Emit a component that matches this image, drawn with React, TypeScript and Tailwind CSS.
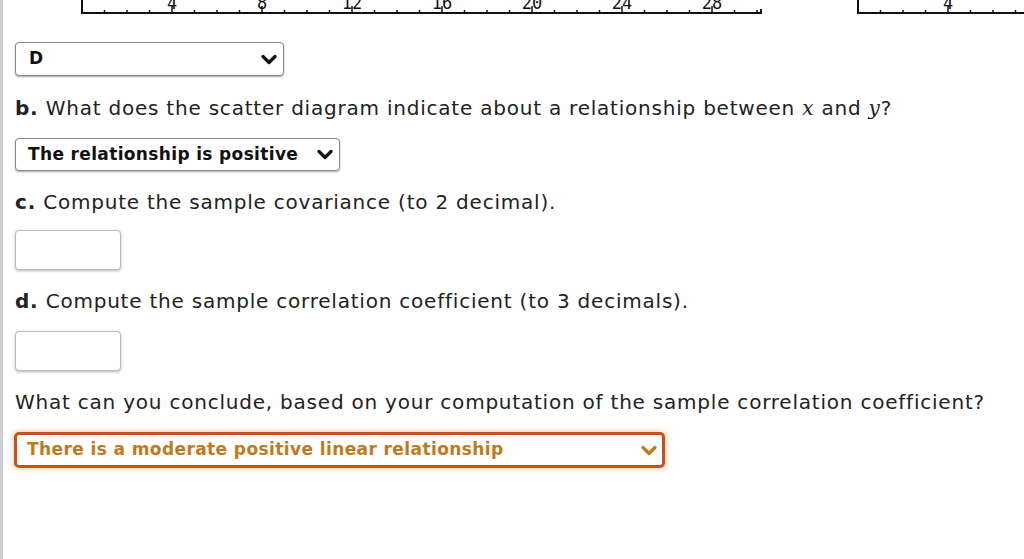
import React from 'react';

const font = { fontFamily: '"DejaVu Sans", Verdana, sans-serif' };

const Chevron = ({ color = '#111' }: { color?: string }) => (
  <svg width="16" height="11" viewBox="0 0 16 11" className="shrink-0">
    <polyline points="2,2.5 8,8.5 14,2.5" fill="none" stroke={color} strokeWidth="3.2" strokeLinecap="round" strokeLinejoin="round" />
  </svg>
);

const AxisStrip = () => {
  const unit = 22.5;
  const x0 = 82;
  const minor = Array.from({ length: 31 }, (_, i) => i);
  const labels = [4, 8, 12, 16, 20, 24, 28];
  const x1 = 858;
  return (
    <svg width="1024" height="20" className="block">
      <line x1={x0} y1="0" x2={x0} y2="14" stroke="#111" strokeWidth="2" />
      <line x1={x0} y1="13" x2="761" y2="13" stroke="#111" strokeWidth="2" />
      <line x1="761" y1="9" x2="761" y2="14" stroke="#111" strokeWidth="2" />
      {minor.map((i) => (
        <line key={i} x1={x0 + i * unit} y1={labels.includes(i) ? 6 : 10} x2={x0 + i * unit} y2="13" stroke="#111" strokeWidth="1.5" />
      ))}
      {labels.map((n) => (
        <text key={n} x={x0 + n * unit} y="9" textAnchor="middle" fontSize="17" fontFamily='"DejaVu Sans Mono", monospace' fill="#111">{n}</text>
      ))}
      <line x1={x1} y1="0" x2={x1} y2="14" stroke="#111" strokeWidth="2" />
      <line x1={x1} y1="13" x2="1024" y2="13" stroke="#111" strokeWidth="2" />
      {Array.from({ length: 8 }, (_, i) => i).map((i) => (
        <line key={i} x1={x1 + i * unit} y1={i === 4 ? 6 : 10} x2={x1 + i * unit} y2="13" stroke="#111" strokeWidth="1.5" />
      ))}
      <text x={x1 + 4 * unit} y="9" textAnchor="middle" fontSize="17" fontFamily='"DejaVu Sans Mono", monospace' fill="#111">4</text>
    </svg>
  );
};

const Select = ({ label, className }: { label: string; className: string }) => (
  <div className={`flex items-center justify-between rounded-[4px] border border-[#8a8a8a] bg-white shadow-[0_1px_2px_rgba(0,0,0,0.35)] ${className}`}>
    <span className="text-[17px] font-bold tracking-[0.35px] text-[#111]">{label}</span>
    <Chevron />
  </div>
);

const Input = () => (
  <div className="h-[40px] w-[106px] rounded-[4px] border border-[#bdbdbd] bg-white shadow-[0_1px_3px_rgba(0,0,0,0.3)]" />
);

const Q = ({ letter, children }: { letter: string; children: React.ReactNode }) => (
  <p className="text-[20px] leading-[24px] tracking-[0.78px] text-[#222]">
    <span className="font-bold">{letter}.</span> {children}
  </p>
);

const mathVar = { fontFamily: '"DejaVu Serif", serif' };

export default function App() {
  return (
    <div className="h-[559px] w-[1024px] overflow-hidden bg-white" style={font}>
      <div className="flex h-full">
        <div className="w-[3px] shrink-0 bg-[#cfcfcf]" />
        <div className="flex-1">
          <div className="-ml-[3px]">
            <AxisStrip />
          </div>
          <div className="pl-[12px]">
            <Select label="D" className="mt-[22px] h-[34px] w-[269px] pl-[13px] pr-[6px]" />
            <div className="mt-[20px]">
              <Q letter="b">
                What does the scatter diagram indicate about a relationship between{' '}
                <i style={mathVar}>x</i> and <i style={mathVar}>y</i>?
              </Q>
            </div>
            <Select label="The relationship is positive" className="mt-[18px] h-[33px] w-[325px] pl-[12px] pr-[6px]" />
            <div className="mt-[19px]">
              <Q letter="c">Compute the sample covariance (to 2 decimal).</Q>
            </div>
            <div className="mt-[16px]">
              <Input />
            </div>
            <div className="mt-[19px]">
              <Q letter="d">Compute the sample correlation coefficient (to 3 decimals).</Q>
            </div>
            <div className="mt-[18px]">
              <Input />
            </div>
            <p className="mt-[19px] text-[20px] leading-[24px] tracking-[0.78px] text-[#222]">
              What can you conclude, based on your computation of the sample correlation coefficient?
            </p>
            <div className="mt-[18px] -ml-[1px] w-[651px] rounded-[5px] shadow-[0_0_4px_2px_rgba(240,170,110,0.45)]">
              <div className="flex h-[36px] items-center justify-between rounded-[5px] border-[3px] border-[#c4521a] bg-white pl-[10px] pr-[5px]">
                <span className="text-[17px] font-bold tracking-[0.4px] text-[#c07a1c]">There is a moderate positive linear relationship</span>
                <Chevron color="#c07a1c" />
              </div>
            </div>
          </div>
        </div>
      </div>
    </div>
  );
}
